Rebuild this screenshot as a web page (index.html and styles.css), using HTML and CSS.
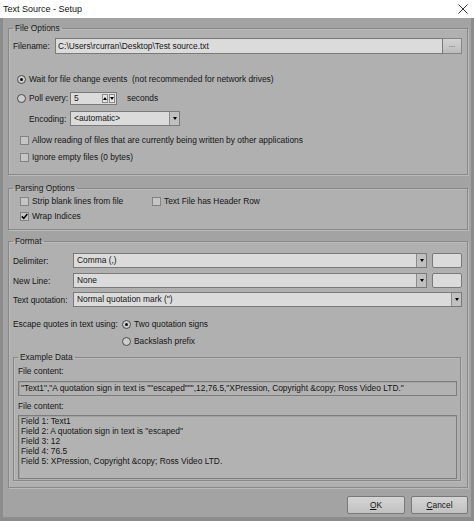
FILE: index.html
```html
<!DOCTYPE html>
<html>
<head>
<meta charset="utf-8">
<title>Text Source - Setup</title>
<link rel="stylesheet" href="styles.css">
</head>
<body>
<div class="window">
  <div class="titlebar">
    <span class="title">Text Source - Setup</span>
    <svg class="close" width="10" height="10" viewBox="0 0 10 10"><path d="M0.5 0.5L9.5 9.5M9.5 0.5L0.5 9.5" stroke="#333" stroke-width="1" fill="none"/></svg>
  </div>
  <div class="client">
    <fieldset class="group g-file">
      <legend>File Options</legend>
      <div class="row r-filename">
        <span class="lbl-file">Filename:</span>
        <div class="input path">C:\Users\rcurran\Desktop\Test source.txt</div>
        <div class="browse">...</div>
      </div>
      <div class="row r-wait"><span class="radio on"></span><span>Wait for file change events&nbsp; (not recommended for network drives)</span></div>
      <div class="row r-poll">
        <span class="radio"></span><span class="lbl-poll">Poll every:</span>
        <div class="spin"><span class="spin-val">5</span><span class="sbtn"><span class="tri up"></span></span><span class="sbtn"><span class="tri"></span></span></div>
        <span class="seconds">seconds</span>
      </div>
      <div class="row r-enc">
        <span class="lbl-enc">Encoding:</span>
        <div class="combo enc"><span class="combo-val">&lt;automatic&gt;</span><span class="drop"><span class="tri"></span></span></div>
      </div>
      <div class="row r-cb1"><span class="check"></span><span>Allow reading of files that are currently being written by other applications</span></div>
      <div class="row r-cb2"><span class="check"></span><span>Ignore empty files (0 bytes)</span></div>
    </fieldset>

    <fieldset class="group g-parse">
      <legend>Parsing Options</legend>
      <div class="row r-p1">
        <span class="pcell"><span class="check"></span><span>Strip blank lines from file</span></span>
        <span class="pcell"><span class="check"></span><span>Text File has Header Row</span></span>
      </div>
      <div class="row r-p2"><span class="check on"><svg width="7" height="7" viewBox="0 0 7 7"><path d="M0.8 3.4L2.8 5.4L6.3 1" stroke="#000" stroke-width="1.5" fill="none"/></svg></span><span>Wrap Indices</span></div>
    </fieldset>

    <fieldset class="group g-format">
      <legend>Format</legend>
      <div class="row r-delim">
        <span class="lbl-fmt">Delimiter:</span>
        <div class="combo fmt"><span class="combo-val">Comma (,)</span><span class="drop"><span class="tri"></span></span></div>
        <div class="smallbox"></div>
      </div>
      <div class="row r-newline">
        <span class="lbl-fmt">New Line:</span>
        <div class="combo fmt"><span class="combo-val">None</span><span class="drop"><span class="tri"></span></span></div>
        <div class="smallbox"></div>
      </div>
      <div class="row r-quote">
        <span class="lbl-fmt">Text quotation:</span>
        <div class="combo fmt"><span class="combo-val">Normal quotation mark (")</span><span class="drop"><span class="tri"></span></span></div>
      </div>
      <div class="row r-esc">
        <span class="lbl-esc">Escape quotes in text using:</span>
        <span class="radio on"></span><span>Two quotation signs</span>
      </div>
      <div class="row r-back">
        <span class="radio"></span><span>Backslash prefix</span>
      </div>
      <fieldset class="group g-example">
        <legend>Example Data</legend>
        <div class="row r-lbl1">File content:</div>
        <div class="rbox single">"Text1","A quotation sign in text is ""escaped""",12,76.5,"XPression, Copyright &amp;copy; Ross Video LTD."</div>
        <div class="row r-lbl2">File content:</div>
        <div class="rbox multi">
          <div>Field 1: Text1</div>
          <div>Field 2: A quotation sign in text is "escaped"</div>
          <div>Field 3: 12</div>
          <div>Field 4: 76.5</div>
          <div>Field 5: XPression, Copyright &amp;copy; Ross Video LTD.</div>
        </div>
      </fieldset>
    </fieldset>

    <div class="buttons">
      <button class="btn ok"><u>O</u>K</button>
      <button class="btn cancel"><u>C</u>ancel</button>
    </div>
  </div>
</div>
</body>
</html>
```
FILE: styles.css
```css
* { box-sizing: border-box; }
html, body { margin: 0; padding: 0; }
body {
  width: 474px;
  height: 521px;
  overflow: hidden;
  background: #a3a3a3;
  font-family: "Liberation Sans", Arial, sans-serif;
  font-size: 8.4px;
  color: #151515;
}
.window { width: 474px; height: 521px; display: flex; flex-direction: column; }

.titlebar {
  height: 18px;
  flex: none;
  background: #ffffff;
  display: flex;
  align-items: center;
  justify-content: space-between;
  padding: 0 6px 0 3px;
}
.title { font-size: 9px; color: #111; }
.close { display: block; }

.client {
  flex: 1;
  background: #a3a3a3;
  border-left: 3px solid #8c8c8c;
  border-right: 3px solid #8c8c8c;
  border-bottom: 4px solid #8c8c8c;
  padding: 4px 3px 0 5px;
  display: flex;
  flex-direction: column;
}

.group {
  margin: 0;
  min-width: 0;
  border: 1px solid #888888;
  background: #b0b0b0;
  box-shadow: 1px 1px 0 #bababa, inset 1px 1px 0 #bababa;
}
.group > legend {
  padding: 0 2px;
  height: 12px;
  line-height: 12px;
  font-size: 8.4px;
  color: #1a1a1a;
}

.row { display: flex; align-items: center; white-space: nowrap; }

/* File options */
.g-file { padding: 4px 5px 10px 4px; }
.r-filename { height: 16px; }
.lbl-file { width: 42px; flex: none; }
.input {
  height: 16px;
  background: #dbdbdb;
  border: 1px solid #7a7a7a;
  padding: 0 2px;
  line-height: 14px;
  overflow: hidden;
}
.path { flex: 1; }
.browse {
  width: 19px;
  height: 16px;
  flex: none;
  border: 1px solid #868686;
  border-left: none;
  background: linear-gradient(#d2d2d2, #bcbcbc);
  color: #555;
  font-size: 8px;
  text-align: center;
  line-height: 12px;
}
.r-wait { height: 14px; margin-top: 18px; padding-left: 4px; }
.r-poll { height: 14px; margin-top: 5px; padding-left: 4px; }
.r-enc { height: 15px; margin-top: 6px; padding-left: 16px; }
.r-cb1 { height: 14px; margin-top: 7px; padding-left: 7px; }
.r-cb2 { height: 14px; margin-top: 3px; padding-left: 7px; }

.radio {
  width: 9px;
  height: 9px;
  flex: none;
  border-radius: 50%;
  border: 1px solid #4a4a4a;
  background: #cdcdcd;
  margin-right: 3px;
  display: flex;
  align-items: center;
  justify-content: center;
}
.radio.on::after {
  content: "";
  width: 3px;
  height: 3px;
  border-radius: 50%;
  background: #111;
}
.check {
  width: 9px;
  height: 9px;
  flex: none;
  border: 1px solid #838383;
  background: #c5c5c5;
  margin-right: 3px;
  display: flex;
  align-items: center;
  justify-content: center;
}
.check svg { display: block; }

.lbl-poll { width: 41px; flex: none; }
.spin {
  width: 47px;
  height: 13px;
  flex: none;
  display: flex;
  align-items: center;
  background: #dbdbdb;
  border: 1px solid #7a7a7a;
  padding: 1px;
}
.spin-val { flex: 1; padding-left: 2px; line-height: 11px; }
.sbtn {
  width: 6px;
  height: 9px;
  margin-left: 1px;
  border: 1px solid #8c8c8c;
  background: #e6e6e6;
  display: flex;
  align-items: center;
  justify-content: center;
}
.seconds { margin-left: 10px; }

.tri {
  width: 0;
  height: 0;
  border-left: 2px solid transparent;
  border-right: 2px solid transparent;
  border-top: 3px solid #000;
}
.tri.up { border-top: none; border-bottom: 3px solid #000; }

.lbl-enc { width: 41px; flex: none; }
.combo {
  height: 15px;
  display: flex;
  align-items: stretch;
  background: #dbdbdb;
  border: 1px solid #7a7a7a;
}
.combo-val { flex: 1; padding-left: 3px; line-height: 13px; overflow: hidden; }
.drop {
  width: 10px;
  flex: none;
  border-left: 1px solid #8c8c8c;
  background: #c0c0c0;
  display: flex;
  align-items: center;
  justify-content: center;
}
.enc { width: 110px; flex: none; }

/* Parsing */
.g-parse { margin-top: 7px; padding: 0 5px 6px 4px; }
.r-p1 { height: 14px; padding-left: 7px; }
.pcell { display: flex; align-items: center; }
.pcell:first-child { width: 132px; }
.r-p2 { height: 14px; margin-top: 1px; padding-left: 7px; }

/* Format */
.g-format { margin-top: 5px; padding: 6px 5px 6px 4px; }
.lbl-fmt { width: 60px; flex: none; }
.fmt { flex: 1; }
.r-delim, .r-newline, .r-quote { height: 15px; }
.r-newline { margin-top: 5px; }
.r-quote { margin-top: 4px; }
.smallbox {
  width: 30px;
  height: 15px;
  flex: none;
  margin-left: 5px;
  background: #dbdbdb;
  border: 1px solid #7a7a7a;
  border-radius: 2px;
}
.r-esc { height: 14px; margin-top: 10px; }
.lbl-esc { width: 109px; flex: none; }
.r-back { height: 14px; margin-top: 3px; padding-left: 109px; }

.g-example { margin: 3px 1px 0 0; padding: 2px 3px 1px 4px; }
.r-lbl1, .r-lbl2 { height: 12px; }
.r-lbl2 { margin-top: 4px; }
.rbox {
  background: #b2b2b2;
  border: 1px solid #7d7d7d;
  box-shadow: inset 1px 1px 0 #a2a2a2;
  padding: 0 2px;
  white-space: nowrap;
  overflow: hidden;
}
.single { height: 15px; margin-top: 4px; line-height: 13px; }
.multi { height: 64px; margin-top: 3px; line-height: 10px; padding-top: 0; }

.buttons {
  display: flex;
  justify-content: flex-end;
  gap: 6px;
  margin-top: 8px;
}
.btn {
  font-family: "Liberation Sans", Arial, sans-serif;
  font-size: 8.4px;
  color: #151515;
  height: 18px;
  padding: 0;
  border: 1px solid #787878;
  border-radius: 2px;
  background: linear-gradient(#d4d4d4, #c1c1c1);
}
.ok { width: 58px; }
.cancel { width: 57px; }
```
